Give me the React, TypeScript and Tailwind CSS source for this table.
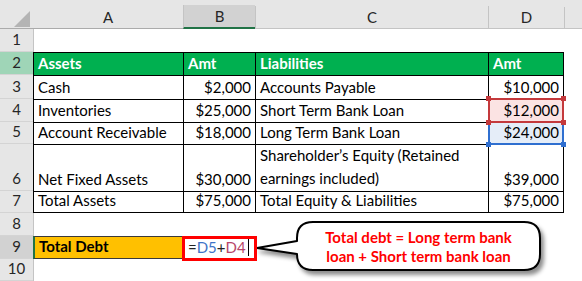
import { ReactNode } from "react";

const cx = (...c: (string | false | undefined)[]) => c.filter(Boolean).join(" ");

function ColHead({ label, active, first }: { label?: string; active?: boolean; first?: boolean }) {
  return (
    <div className="flex flex-col bg-[#e6e6e6]">
      <div className="h-[7px]" />
      <div
        className={cx(
          "flex flex-1 items-center justify-center text-[15px] text-[#262626] border-b border-[#ababab]",
          !first && "border-l border-[#c4c4c4]",
          active && "bg-[#d2d2d2] text-[#1e5b3a] border-b-2 border-b-[#217346]"
        )}
      >
        {label}
      </div>
    </div>
  );
}

function RowHead({ n, tone }: { n: number; tone?: "green" | "active" }) {
  return (
    <div
      className={cx(
        "flex items-end justify-center border-b border-[#d4d4d4] pb-[1px] text-[15px] leading-[21px] text-[#262626]",
        tone === "green" ? "bg-[#9fd5b7]" : tone === "active" ? "bg-[#d2d2d2] text-[#1e5b3a]" : "bg-[#e6e6e6]"
      )}
    >
      {n}
    </div>
  );
}

function Cell({ children, className, right }: { children?: ReactNode; className?: string; right?: boolean }) {
  return (
    <div
      className={cx(
        "relative flex items-end whitespace-nowrap px-[4px] pb-[1px] text-[15px] leading-[21px] text-black",
        right && "justify-end",
        className
      )}
    >
      {children}
    </div>
  );
}

// Excel-style reference highlight around a cell, with handle squares
function Mark({ color, top }: { color: string; top?: boolean }) {
  const sq = "absolute h-[5px] w-[5px]";
  return (
    <div className="pointer-events-none absolute -left-[1px] -top-[2px] -right-[1px] -bottom-[1px]">
      <div className="absolute inset-0 border-2" style={{ borderColor: color }} />
      {top && <div className={cx(sq, "-left-[2px] -top-[2px]")} style={{ background: color }} />}
      {top && <div className={cx(sq, "-right-[2px] -top-[2px]")} style={{ background: color }} />}
      <div className={cx(sq, "-left-[2px] -bottom-[2px]")} style={{ background: color }} />
      <div className={cx(sq, "-right-[2px] -bottom-[2px]")} style={{ background: color }} />
    </div>
  );
}

const T = "border-l border-t border-black";

export default function App() {
  return (
    <div className="relative h-[281px] w-[582px] overflow-hidden bg-white font-[Lato,'Open_Sans',sans-serif]">
      <div className="grid grid-cols-[33px_150px_72px_233px_76px_1fr] grid-rows-[29px_23px_23px_24px_23px_22px_47px_22px_23px_23px_22px]">
        {/* column headers */}
        <div className="relative bg-[#e6e6e6] border-b border-[#ababab]">
          <svg className="absolute left-[14px] top-[11px]" width="16" height="16" viewBox="0 0 16 16">
            <polygon points="16,0 16,16 0,16" fill="#b4b4b4" />
          </svg>
        </div>
        <ColHead label="A" first />
        <ColHead label="B" active />
        <ColHead label="C" />
        <ColHead label="D" />
        <ColHead />

        {/* row 1 */}
        <RowHead n={1} />
        <Cell className="border-l border-[#c4c4c4]" />
        <Cell />
        <Cell />
        <Cell />
        <Cell />

        {/* row 2 */}
        <RowHead n={2} tone="green" />
        <Cell className={cx(T, "bg-[#00b050] font-bold text-white")}>Assets</Cell>
        <Cell className={cx(T, "bg-[#00b050] font-bold text-white")}>Amt</Cell>
        <Cell className={cx(T, "bg-[#00b050] font-bold text-white")}>Liabilities</Cell>
        <Cell className={cx(T, "border-r bg-[#00b050] font-bold text-white")}>Amt</Cell>
        <Cell />

        {/* row 3 */}
        <RowHead n={3} />
        <Cell className={T}>Cash</Cell>
        <Cell className={T} right>$2,000</Cell>
        <Cell className={T}>Accounts Payable</Cell>
        <Cell className={cx(T, "border-r")} right>$10,000</Cell>
        <Cell />

        {/* row 4 */}
        <RowHead n={4} />
        <Cell className={T}>Inventories</Cell>
        <Cell className={T} right>$25,000</Cell>
        <Cell className={T}>Short Term Bank Loan</Cell>
        <Cell className={cx(T, "z-20 border-r bg-[#fbe3e3]")} right>
          <Mark color="#c4393c" top />
          $12,000
        </Cell>
        <Cell />

        {/* row 5 */}
        <RowHead n={5} />
        <Cell className={T}>Account Receivable</Cell>
        <Cell className={T} right>$18,000</Cell>
        <Cell className={T}>Long Term Bank Loan</Cell>
        <Cell className={cx(T, "z-10 border-r bg-[#e5edf8]")} right>
          <Mark color="#2f6fd0" />
          $24,000
        </Cell>
        <Cell />

        {/* row 6 */}
        <RowHead n={6} />
        <Cell className={T}>Net Fixed Assets</Cell>
        <Cell className={T} right>$30,000</Cell>
        <Cell className={cx(T, "leading-[23px]")}>
          <div>
            Shareholder’s Equity (Retained
            <br />
            earnings included)
          </div>
        </Cell>
        <Cell className={cx(T, "border-r")} right>$39,000</Cell>
        <Cell />

        {/* row 7 */}
        <RowHead n={7} />
        <Cell className={cx(T, "border-b")}>Total Assets</Cell>
        <Cell className={cx(T, "border-b")} right>$75,000</Cell>
        <Cell className={cx(T, "border-b")}>Total Equity &amp; Liabilities</Cell>
        <Cell className={cx(T, "border-b border-r")} right>$75,000</Cell>
        <Cell />

        {/* row 8 */}
        <RowHead n={8} />
        <Cell className="border-l border-[#c4c4c4]" />
        <Cell />
        <Cell />
        <Cell />
        <Cell />

        {/* row 9 */}
        <RowHead n={9} tone="active" />
        <Cell className="border-l-2 border-l-[#217346] border-y border-y-[#3a3a3a] bg-[#ffc000] font-bold">
          Total Debt
        </Cell>
        <Cell className="z-10">
          <div className="pointer-events-none absolute -left-[1px] top-0 -right-[2px] -bottom-[2px] border-[3px] border-[#ff0000]" />
          <span className="pl-[1px]">
            <span className="text-[#222]">=</span>
            <span className="text-[#3e74c8]">D5</span>
            <span className="text-[#222]">+</span>
            <span className="text-[#b8466a]">D4</span>
          </span>
          <span className="mb-[2px] ml-[2px] inline-block h-[17px] w-px bg-black" />
        </Cell>
        <Cell />
        <Cell />
        <Cell />

        {/* row 10 */}
        <RowHead n={10} />
        <Cell className="border-l border-[#c4c4c4]" />
        <Cell />
        <Cell />
        <Cell />
        <Cell />
      </div>

      {/* callout */}
      <div className="absolute left-[250px] top-[216px] h-[65px] w-[300px]">
        <svg
          width="300"
          height="65"
          viewBox="0 0 300 65"
          className="absolute inset-0 [filter:drop-shadow(3px_4px_2px_rgba(0,0,0,0.45))]"
        >
          <path
            d="M 63 6 H 274 Q 290 6 290 22 V 38 Q 290 54 274 54 H 63 Q 47 54 47 38 L 7 32 L 47 25 V 22 Q 47 6 63 6 Z"
            fill="white"
            stroke="black"
            strokeWidth="2"
            strokeLinejoin="round"
          />
        </svg>
        <div className="absolute left-[47px] top-[12px] w-[243px] text-center text-[15px] font-bold leading-[19px] text-[#ff0000]">
          Total debt = Long term bank
          <br />
          loan + Short term bank loan
        </div>
      </div>
    </div>
  );
}
